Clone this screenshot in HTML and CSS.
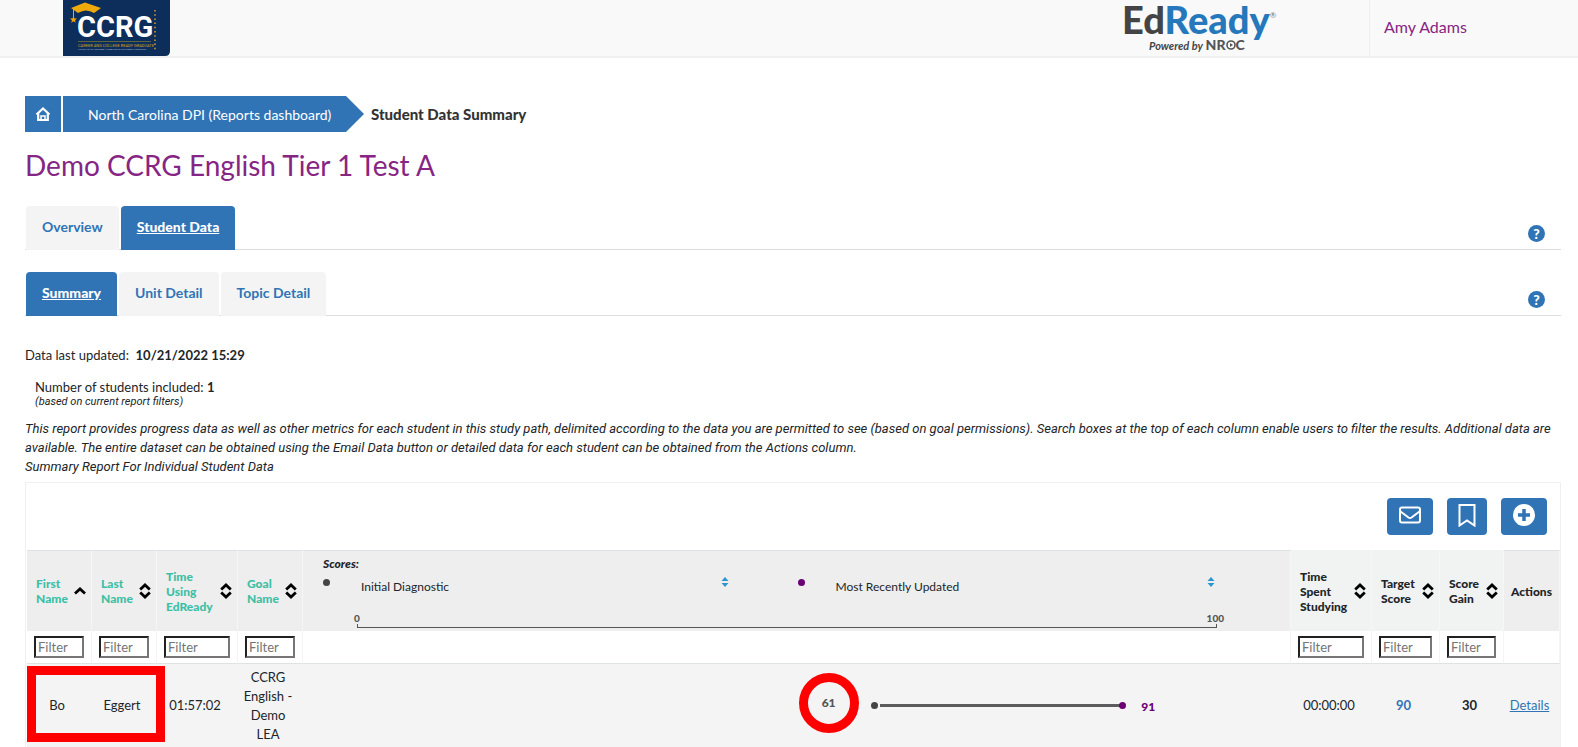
FILE: index.html
```html
<!DOCTYPE html>
<html lang="en">
<head>
<meta charset="utf-8">
<title>Student Data Summary</title>
<link rel="stylesheet" href="styles.css">
</head>
<body>
<svg class="defs" aria-hidden="true">
  <symbol id="sort" viewBox="0 0 12 16"><path d="M1.200 6.500 6 2 10.800 6.500M1.200 9.500 6 14 10.800 9.500" fill="none" stroke="#000" stroke-width="2.800"/></symbol>
  <symbol id="asc" viewBox="0 0 12 16"><path d="M1 10.500 6 6 11 10.500" fill="none" stroke="#000" stroke-width="2.800"/></symbol>
  <symbol id="updown" viewBox="0 0 8 10"><path d="M4 0 7.500 4H.5ZM.5 6h7L4 10Z" fill="#2b96d0"/></symbol>
</svg>
<header class="top">
  <svg class="ccrg" viewBox="0 0 107 56" role="img" aria-label="CCRG">
    <path d="M0 0H107V51Q107 56 102 56H0Z" fill="#0d2d5b"/>
    <text x="14" y="37" class="ccrg-name">CCRG</text>
    <path d="M8 8 22 2.500 38 8 31 13Q23 8 15 13Z" fill="#f0a90a"/>
    <path d="M10.500 9V18" stroke="#f0a90a"/>
    <path d="m10.500 16 1 2.500h2.500l-2 1.700.8 2.600-2.300-1.500-2.300 1.500.8-2.600-2-1.700h2.500Z" fill="#f0a90a"/>
    <path d="M15 41.500H88" stroke="#5d6440"/>
    <path d="M92 10V51" stroke="#d5a020" stroke-width="1.500" stroke-dasharray="1.500 2.700"/>
    <text x="15" y="47" class="ccrg-sub">CAREER AND COLLEGE READY GRADUATE</text>
    <text x="15" y="50" class="ccrg-fine">NC COMMUNITY COLLEGES | NC DEPARTMENT OF PUBLIC INSTRUCTION</text>
  </svg>
  <div class="brand">
    <div class="edready"><span>Ed</span>Ready<sup>®</sup></div>
    <div class="powered"><i>Powered by</i> <b>NR<svg viewBox="0 0 10 10"><circle cx="5" cy="5" r="4" fill="none" stroke="#555" stroke-width="1.600"/><path d="M4 3 7 5 4 7Z" fill="#555"/></svg>C</b></div>
  </div>
  <a class="user" href="#">Amy Adams</a>
</header>
<main>
  <nav class="crumbs" aria-label="Breadcrumb">
    <a class="home" href="#" aria-label="Home"><svg viewBox="0 0 16 16"><path d="M1.500 8.500 8 2.500 14.500 8.500M3.200 7.500V14H12.800V7.500" fill="none" stroke="#fff" stroke-width="2.200"/><path d="M6 14V10H10V14" fill="none" stroke="#fff" stroke-width="1.500"/></svg></a>
    <a class="crumb" href="#">North Carolina DPI (Reports dashboard)</a>
    <b>Student Data Summary</b>
  </nav>
  <h1>Demo CCRG English Tier 1 Test A</h1>
  <nav class="tabs">
    <a href="#">Overview</a><a href="#" class="on">Student Data</a>
    <button class="help" aria-label="Help">?</button>
  </nav>
  <nav class="tabs">
    <a href="#" class="on">Summary</a><a href="#">Unit Detail</a><a href="#">Topic Detail</a>
    <button class="help" aria-label="Help">?</button>
  </nav>
  <p class="updated">Data last updated: &nbsp;<b>10/21/2022 15:29</b></p>
  <p class="count">Number of students included: <b>1</b><i>(based on current report filters)</i></p>
  <p class="about">This report provides progress data as well as other metrics for each student in this study path, delimited according to the data you are permitted to see (based on goal permissions). Search boxes at the top of each column enable users to filter the results. Additional data are available. The entire dataset can be obtained using the Email Data button or detailed data for each student can be obtained from the Actions column.<br>Summary Report For Individual Student Data</p>
  <section class="panel">
    <div class="actions">
      <button aria-label="Email data"><svg viewBox="0 0 24 24"><rect x="2" y="4.500" width="20" height="15" rx="2" fill="none" stroke="#fff" stroke-width="2"/><path d="m2.500 8.500 8 6q1.500 1 3 0l8-6" fill="none" stroke="#fff" stroke-width="2"/></svg></button>
      <button class="slim" aria-label="Bookmark"><svg viewBox="0 0 24 24"><path d="M4.500 2H19.500V22.500L12 17.500 4.500 22.500Z" fill="none" stroke="#fff" stroke-width="2"/></svg></button>
      <button aria-label="Add"><svg viewBox="0 0 24 24"><circle cx="12" cy="12" r="11" fill="#fff"/><path d="M12 6V18M6 12H18" stroke="#3074b5" stroke-width="3.500"/></svg></button>
    </div>
    <table>
      <colgroup><col class="c-name"><col class="c-name"><col class="c-time"><col class="c-name"><col><col class="c-time"><col class="c-target"><col class="c-gain"><col class="c-act"></colgroup>
      <thead>
        <tr class="heads">
          <th><div class="h green">First Name<svg><use href="#asc"/></svg></div></th>
          <th><div class="h green">Last Name<svg><use href="#sort"/></svg></div></th>
          <th><div class="h green">Time Using EdReady<svg><use href="#sort"/></svg></div></th>
          <th><div class="h green">Goal Name<svg><use href="#sort"/></svg></div></th>
          <th class="scores">
            <i>Scores:</i>
            <div class="legend">
              <span class="dot"></span><span class="name">Initial Diagnostic</span><svg><use href="#updown"/></svg>
              <span class="dot purple"></span><span class="name recent">Most Recently Updated</span><svg><use href="#updown"/></svg>
            </div>
            <div class="nums"><span>0</span><span>100</span></div>
            <div class="axis"></div>
          </th>
          <th class="tint"><div class="h">Time Spent Studying<svg><use href="#sort"/></svg></div></th>
          <th class="tint"><div class="h">Target Score<svg><use href="#sort"/></svg></div></th>
          <th class="tint"><div class="h">Score Gain<svg><use href="#sort"/></svg></div></th>
          <th class="act">Actions</th>
        </tr>
        <tr class="filters">
          <td><input placeholder="Filter" aria-label="First Name"></td>
          <td><input placeholder="Filter" aria-label="Last Name"></td>
          <td><input placeholder="Filter" aria-label="Time Using EdReady"></td>
          <td><input placeholder="Filter" aria-label="Goal Name"></td>
          <td></td>
          <td><input placeholder="Filter" aria-label="Time Spent Studying"></td>
          <td><input placeholder="Filter" aria-label="Target Score"></td>
          <td><input placeholder="Filter" aria-label="Score Gain"></td>
          <td></td>
        </tr>
      </thead>
      <tbody>
        <tr class="data">
          <td class="marked">Bo<span class="box-mark"></span></td>
          <td>Eggert</td>
          <td>01:57:02</td>
          <td>CCRG English - Demo LEA</td>
          <td class="plot"><div class="range" style="margin-left:60%;width:29%"><span class="from">61</span><span class="dot"></span><span class="bar"></span><span class="dot purple"></span><span class="to">91</span></div></td>
          <td>00:00:00</td>
          <td><b class="goal">90</b></td>
          <td><b>30</b></td>
          <td><a href="#">Details</a></td>
        </tr>
      </tbody>
    </table>
  </section>
</main>
</body>
</html>
```
FILE: styles.css
```css
* { box-sizing: border-box; }
body { margin: 0; font: 13px/19px Lato, sans-serif; color: #212529; background: #fff; }
a { color: #3074b5; }
p { margin: 0; }
.defs { display: none; }

.top { display: flex; height: 58px; padding-left: 63px; background: #f9f9f9; border-bottom: 2px solid #f1f1f1; }
.ccrg { width: 107px; height: 56px; }
.ccrg-name { font: bold 29px Roboto, sans-serif; fill: #fff; }
.ccrg-sub { font: 4px Roboto, sans-serif; fill: #d5a020; }
.ccrg-fine { font: 2px Lato, sans-serif; fill: #c5cedb; }
.brand { margin-left: auto; width: 247px; }
.edready { font: 900 38px/38px Lato, sans-serif; color: #2478bb; white-space: nowrap; }
.edready span { color: #444; }
.edready sup { font-size: 8px; line-height: 8px; font-weight: 400; color: #777; vertical-align: 16px; }
.powered { padding-left: 27px; font-size: 11px; line-height: 13px; color: #444; font-weight: bold; }
.powered b { font-size: 14px; color: #555; font-weight: 900; }
.powered svg { width: 10px; height: 10px; }
.user { width: 209px; padding: 17px 14px; border-left: 1px solid #eee; font-size: 16px; line-height: 20px; color: #862583; text-decoration: none; }

main { padding: 38px 17px 0 25px; }
.crumbs { display: flex; align-items: center; height: 36px; gap: 2px; font-size: 15px; }
.home { display: grid; place-items: center; width: 36px; height: 36px; background: #3074b5; }
.home svg { width: 16px; height: 16px; }
.crumb { width: 301px; height: 36px; padding-left: 25px; font-size: 14px; line-height: 37px; background: #3074b5; color: #fff; text-decoration: none; white-space: nowrap; clip-path: polygon(0 0, 283px 0, 100% 50%, 283px 100%, 0 100%); }
.crumbs b { margin-left: 5px; color: #333; font-weight: 900; }
h1 { margin: 16px 0 24px; font-size: 28px; line-height: 34px; font-weight: 400; color: #862583; }

.tabs { display: flex; gap: 2px; height: 44px; padding-left: 1px; margin-bottom: 22px; border-bottom: 1px solid #ddd; font-size: 14px; font-weight: bold; }
.tabs a { height: 44px; padding: 0 16px; line-height: 42px; border-radius: 4px 4px 0 0; background: #f4f4f4; text-decoration: none; }
.tabs .on { background: #3074b5; color: #fff; text-decoration: underline; font-weight: 900; }
.help { align-self: center; margin: 12px 16px 0 auto; width: 17px; height: 17px; padding: 0; border: 0; border-radius: 50%; background: #3074b5; color: #fff; font: 900 14px/17px Lato, sans-serif; }

.updated { margin-top: 30px; }
.count { margin: 13px 10px 12px; line-height: 18px; }
.count i { display: block; font: italic 11px/11px Roboto, Lato, sans-serif; }
.about { font: italic 13px/19px Roboto, Lato, sans-serif; }

.panel { margin-top: 6px; border: 1px solid #f0f0f0; border-bottom: 0; }
.actions { display: flex; justify-content: flex-end; gap: 14px; padding: 15px 13px; }
.actions button { display: grid; place-items: center; width: 46px; height: 37px; padding: 0 0 4px; border: 0; border-radius: 4px; background: #3074b5; }
.actions .slim { width: 40px; }
.actions svg { width: 24px; height: 24px; }

table { width: 100%; border-collapse: separate; border-spacing: 0; table-layout: fixed; padding-left: 1px; }
.c-name { width: 65px; }
.c-time { width: 81px; }
.c-target { width: 68px; }
.c-gain { width: 64px; }
.c-act { width: 56px; }
th, td { padding: 0; }
.heads th { height: 81px; background: #eee; border-top: 1px solid #dfe1e4; border-right: 1px solid #f6f6f6; text-align: left; font-size: 12px; line-height: 15px; font-weight: 900; }
.heads .tint { background: #f0f3f2; border-top-color: #f0f3f2; }
.h { display: flex; align-items: center; justify-content: space-between; padding: 0 5px 0 9px; }
.h svg { flex: none; width: 12px; height: 16px; }
.green { color: #3dbfa5; }
.heads .act { text-align: center; }
.heads .scores { vertical-align: top; padding: 5px 73px 0 20px; }
.legend { display: flex; align-items: center; height: 22px; font-weight: 400; }
.legend .name { flex: 361 1 0; margin: 8px 0 0 31px; }
.legend .recent { flex-grow: 373; }
.legend svg { width: 8px; height: 10px; margin-right: 69px; }
.legend svg:last-child { margin-right: 2px; }
.dot { flex: none; width: 7px; height: 7px; border-radius: 50%; background: #444; }
.purple { background: #6a0073; }
.nums { display: flex; justify-content: space-between; padding: 19px 0 0 31px; margin-right: -7px; font-size: 10px; line-height: 12px; color: #555; }
.axis { height: 4px; margin-left: 34px; border: 1px solid #555; border-top: 0; }

.filters td { height: 33px; padding: 0 7px; border-right: 1px solid #f4f4f4; border-bottom: 1px solid #dfe1e4; }
.filters input { display: block; width: 100%; height: 22px; padding: 0 2px; border: 2px inset #767676; font: 13px Lato, sans-serif; background: #fff; }
.filters input::placeholder { color: #757575; }

.data td { height: 83px; padding: 0 7px 0 2px; background: #f4f4f4; text-align: center; }
.data .marked { position: relative; }
.box-mark { position: absolute; left: 0; top: 2px; width: 138px; height: 76px; border: 9px solid #f00; }
.data .plot { padding: 0 73px 0 54px; }
.range { position: relative; display: flex; align-items: center; font-size: 12px; font-weight: 900; }
.range .dot { margin: 0 -3px; }
.bar { flex: 1; height: 3px; margin-left: 5px; background: #5c5c5c; }
.from, .to { position: absolute; top: 50%; transform: translateY(-50%); }
.from { right: 100%; display: grid; place-items: center; width: 60px; height: 60px; margin: -3px 15px 0 0; border: 9px solid #f00; border-radius: 50%; color: #555; }
.to { left: 100%; margin-left: 18px; color: #6a0073; }
.goal { color: #3074b5; }
```
